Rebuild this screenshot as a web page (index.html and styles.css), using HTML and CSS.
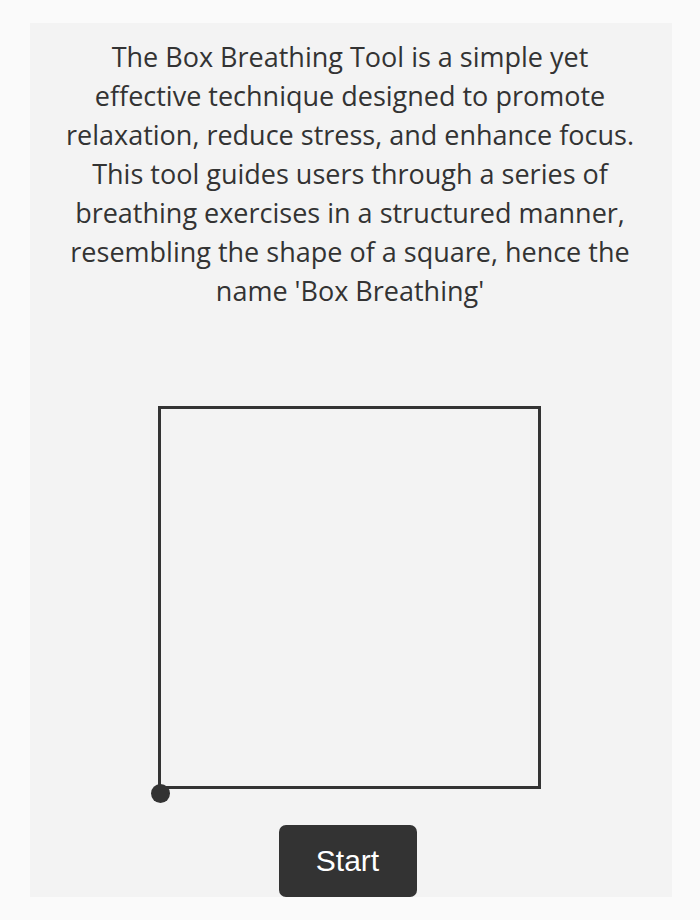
FILE: index.html
```html
<!DOCTYPE html>
<html>
<head>
<meta charset="utf-8">
<link rel="stylesheet" href="styles.css">
</head>
<body>
<div class="panel">
  <p class="intro">The Box Breathing Tool is a simple yet effective technique designed to promote relaxation, reduce stress, and enhance focus. This tool guides users through a series of breathing exercises in a structured manner, resembling the shape of a square, hence the name 'Box Breathing'</p>
  <div class="stage">
    <div class="box">
      <span class="dot"></span>
    </div>
  </div>
  <button class="start">Start</button>
</div>
</body>
</html>
```
FILE: styles.css
```css
html, body {
  margin: 0;
  padding: 0;
  background: #fafafa;
}
body {
  padding-top: 23px;
  font-family: "Open Sans", "Noto Sans", sans-serif;
}
.panel {
  margin-left: 30px;
  width: 642px;
  height: 874px;
  background: #f3f3f3;
  display: flex;
  flex-direction: column;
  align-items: center;
  box-sizing: border-box;
  padding: 14px 20px 0;
}
.intro {
  margin: 0 2px 0 0;
  max-width: 576px;
  text-align: center;
  color: #333;
  font-size: 27px;
  line-height: 39px;
}
.stage {
  margin-top: 96px;
  display: flex;
  justify-content: center;
  margin-right: 3px;
}
.box {
  position: relative;
  width: 383px;
  height: 383px;
  box-sizing: border-box;
  border: 3px solid #333;
}
.dot {
  position: absolute;
  left: -10px;
  bottom: -17px;
  width: 19px;
  height: 19px;
  border-radius: 50%;
  background: #333;
}
.start {
  margin-top: 36px;
  width: 138px;
  height: 72px;
  border: none;
  border-radius: 7px;
  background: #333;
  color: #fff;
  font-family: "Liberation Sans", Arial, sans-serif;
  font-size: 30px;
  padding: 0;
  margin-right: 7px;
}
```
